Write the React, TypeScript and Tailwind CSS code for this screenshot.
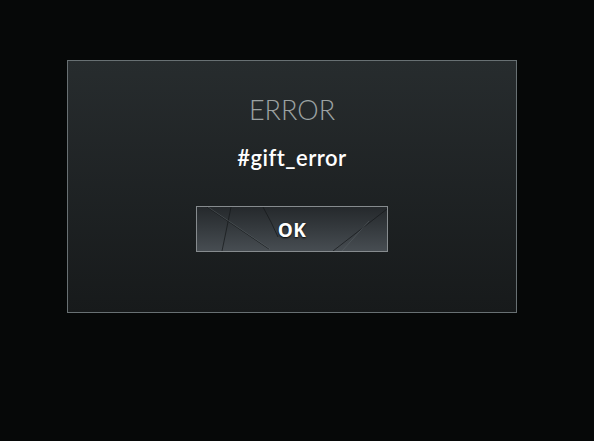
import React from "react";

function OkButton() {
  return (
    <button className="relative h-[46px] w-[192px] overflow-hidden border border-[#868b8e] bg-gradient-to-b from-[#25292c] to-[#474d52]">
      {/* faint streaks across the button face */}
      <svg className="absolute inset-0" width="190" height="44" viewBox="0 0 190 44">
        <g stroke="#15181a" strokeOpacity="0.7" strokeWidth="1" fill="none">
          <path d="M10 0 L72 42" />
          <path d="M34 0 Q30 20 25 44" />
          <path d="M66 0 Q75 16 81 30" />
          <path d="M190 2 L136 44" />
        </g>
        <g stroke="#5c6368" strokeOpacity="0.5" strokeWidth="1" fill="none">
          <path d="M11 0 L73 42" />
          <path d="M172 14 L145 44" />
        </g>
      </svg>
      <span className="relative top-[1px] font-['Open_Sans',sans-serif] text-[19px] font-bold tracking-[0.5px] text-white [text-shadow:0_1px_2px_rgba(0,0,0,0.9)]">
        OK
      </span>
    </button>
  );
}

export default function App() {
  return (
    <div className="h-[441px] w-[594px] bg-[#060808] pl-[67px] pt-[60px]">
      <div className="flex h-[253px] w-[450px] flex-col items-center border border-[#687073] bg-gradient-to-b from-[#272c2e] to-[#171a1b]">
        <h1 className="mt-[33px] font-['Lato',sans-serif] text-[27px] font-light leading-[32px] text-[#9ca2a2]">
          ERROR
        </h1>
        <p className="mt-[19px] font-['Lato',sans-serif] text-[22px] font-semibold leading-[26px] tracking-[0.5px] text-white">
          #gift_error
        </p>
        <div className="mt-[35px]">
          <OkButton />
        </div>
      </div>
    </div>
  );
}
